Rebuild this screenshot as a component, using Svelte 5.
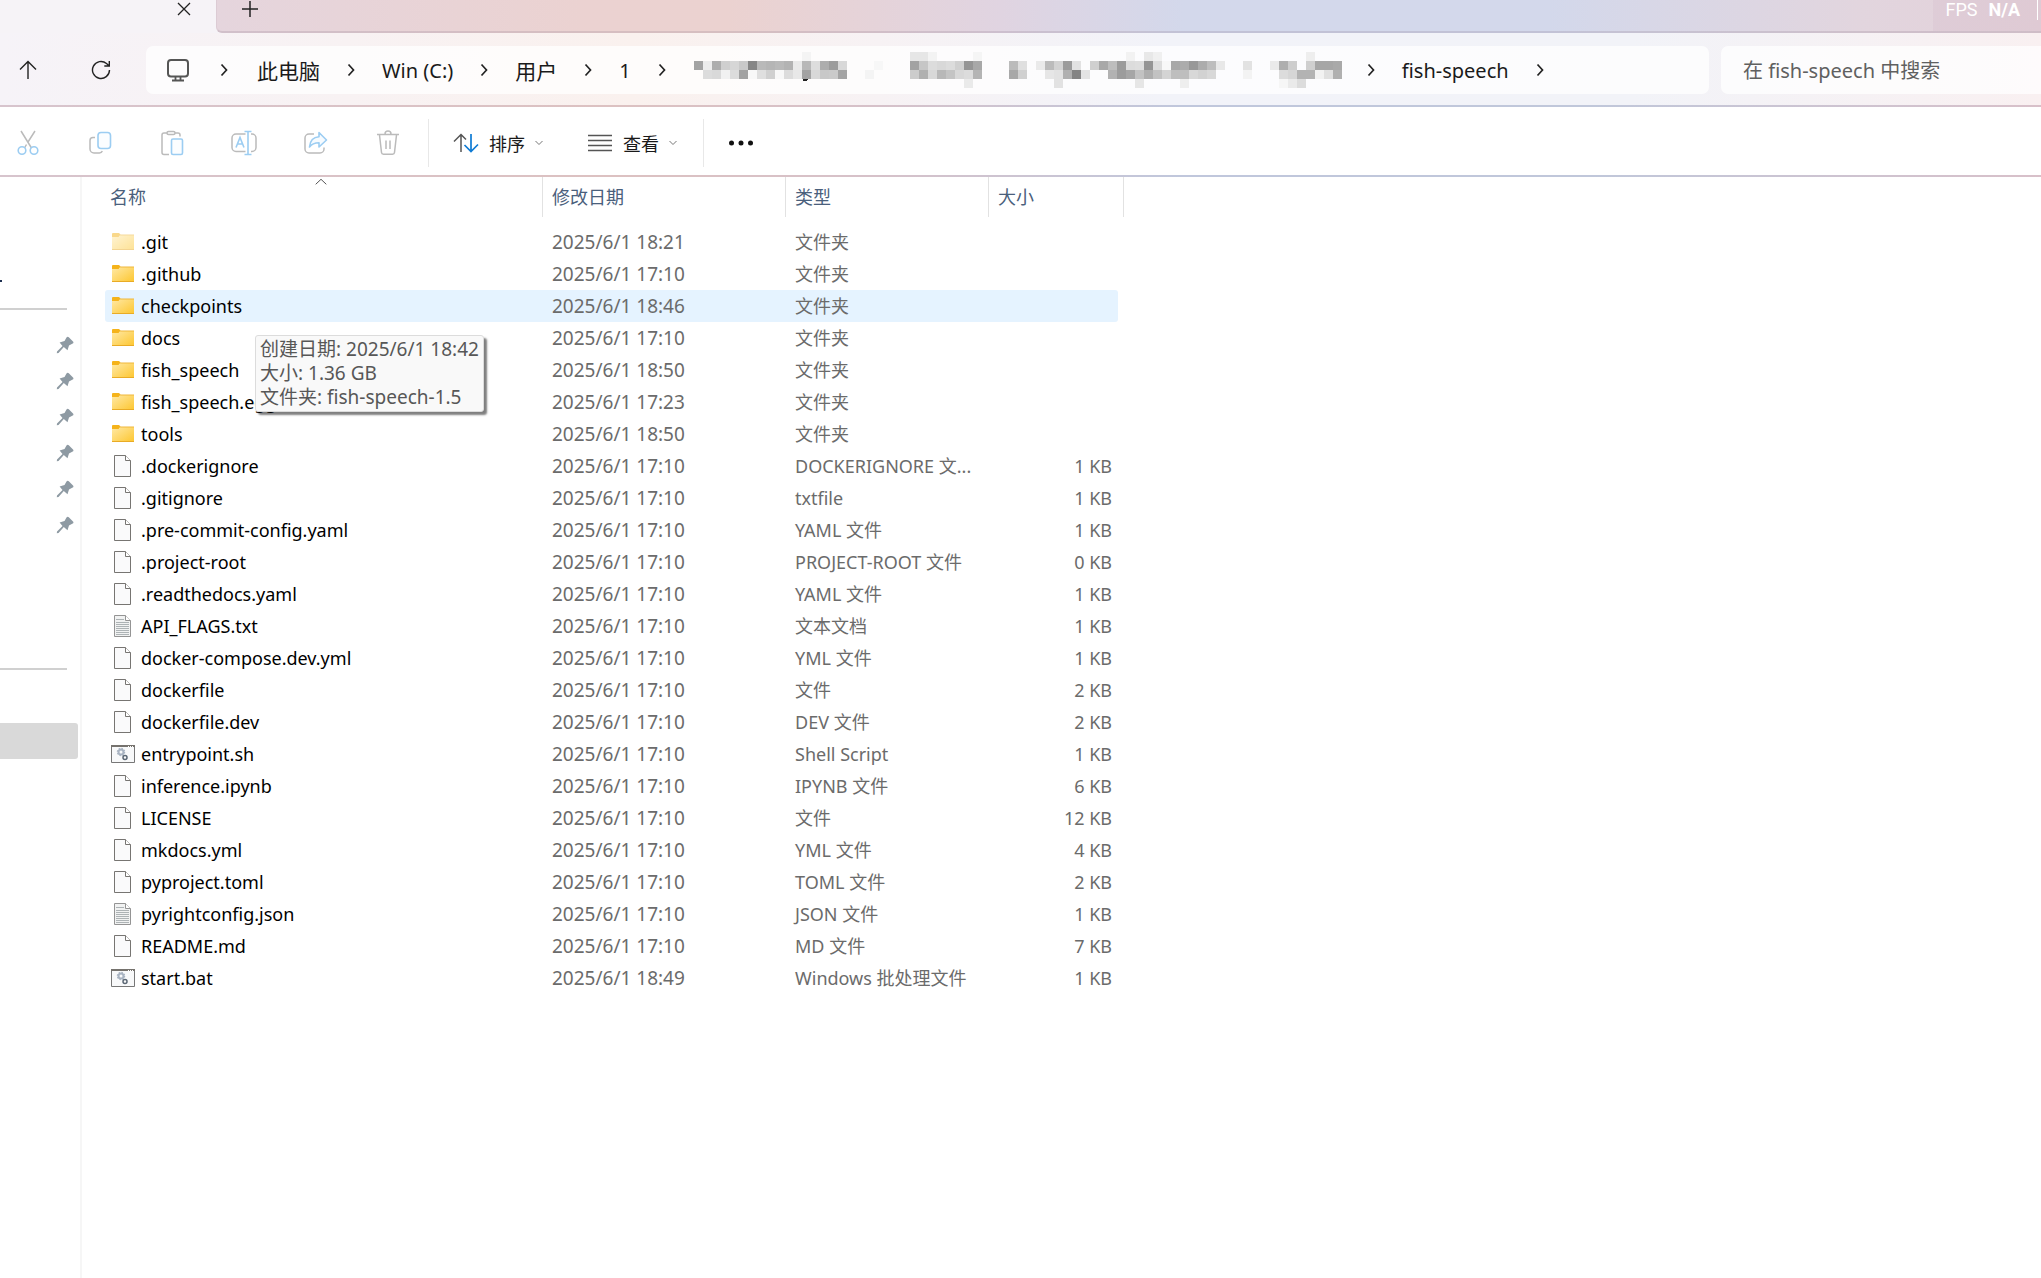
<script>
  const files = [
    ['.git', '18:21', '文件夹', '', 'hidden'],
    ['.github', '17:10', '文件夹', '', 'folder'],
    ['checkpoints', '18:46', '文件夹', '', 'folder'],
    ['docs', '17:10', '文件夹', '', 'folder'],
    ['fish_speech', '18:50', '文件夹', '', 'folder'],
    ['fish_speech.egg-info', '17:23', '文件夹', '', 'folder'],
    ['tools', '18:50', '文件夹', '', 'folder'],
    ['.dockerignore', '17:10', 'DOCKERIGNORE 文...', '1 KB', 'file'],
    ['.gitignore', '17:10', 'txtfile', '1 KB', 'file'],
    ['.pre-commit-config.yaml', '17:10', 'YAML 文件', '1 KB', 'file'],
    ['.project-root', '17:10', 'PROJECT-ROOT 文件', '0 KB', 'file'],
    ['.readthedocs.yaml', '17:10', 'YAML 文件', '1 KB', 'file'],
    ['API_FLAGS.txt', '17:10', '文本文档', '1 KB', 'text'],
    ['docker-compose.dev.yml', '17:10', 'YML 文件', '1 KB', 'file'],
    ['dockerfile', '17:10', '文件', '2 KB', 'file'],
    ['dockerfile.dev', '17:10', 'DEV 文件', '2 KB', 'file'],
    ['entrypoint.sh', '17:10', 'Shell Script', '1 KB', 'script'],
    ['inference.ipynb', '17:10', 'IPYNB 文件', '6 KB', 'file'],
    ['LICENSE', '17:10', '文件', '12 KB', 'file'],
    ['mkdocs.yml', '17:10', 'YML 文件', '4 KB', 'file'],
    ['pyproject.toml', '17:10', 'TOML 文件', '2 KB', 'file'],
    ['pyrightconfig.json', '17:10', 'JSON 文件', '1 KB', 'text'],
    ['README.md', '17:10', 'MD 文件', '7 KB', 'file'],
    ['start.bat', '18:49', 'Windows 批处理文件', '1 KB', 'script'],
  ].map(([name, time, type, size, icon]) => ({ name, date: `2025/6/1 ${time}`, type, size, icon }));

  // Grey levels of the censored path, one [row, first column, levels] run each.
  const runs = [
    [0, 12, 'f4'], [0, 24, 'e6 e6 f3'], [0, 31, 'f5'], [0, 48, 'f2'], [0, 50, 'e8 f0'], [0, 68, 'ee'],
    [1, 0, 'a3 ec ad cf d6 c9 86 b9 b5 b9 b3 ea b8 dd ad 9c d8'], [1, 20, 'f7'],
    [1, 24, 'a2 c6 dc d8 dc d0 95 a8'], [1, 35, 'bb df'], [1, 38, 'ea bb d2 9b e2'],
    [1, 44, 'cf a8 bd 9b dc de 95 dd f8 a8 ac 98 ac bd e8'], [1, 61, 'e2'], [1, 64, 'ea ae cd'], [1, 68, 'cf a6 a6 a9'],
    [2, 1, 'dc d9 f1 dc a2 f8 df d0 f8 dc e8 a3 d8 c8 ca a4'], [2, 19, 'f4'],
    [2, 24, 'cc b0 d8 b8 c4 d8 dc b4'], [2, 35, 'a8 d0'], [2, 39, 'e6 e2 b0 84 e4'],
    [2, 46, 'b2 9c a6 c2 ae c2 d4 be be d8 d2 d8'], [2, 61, 'f3'], [2, 65, 'dc d6 b3 b3 f2 e0 b0'],
    [3, 30, 'ea'], [3, 40, 'e2'], [3, 49, 'e6'], [3, 54, 'ee'], [3, 65, 'f6 ea dc'],
  ];
  const blocks = runs.flatMap(([row, col, levels]) =>
    levels.split(' ').map((g, i) => ({ x: (col + i) * 9, y: row * 9, fill: `#${g}${g}${g}` }))
  );
  const pins = [1, 2, 3, 4, 5, 6];
</script>

{#snippet chevron()}
  <svg class="chev" width="8" height="14" viewBox="0 0 8 14"><path d="M1.5 1.5 6.5 7l-5 5.5" fill="none" stroke="#222" stroke-width="1.7" /></svg>
{/snippet}

{#snippet down()}
  <svg width="8" height="6" viewBox="0 0 8 6"><path d="M.5 1 4 4.5 7.5 1" fill="none" stroke="#777" /></svg>
{/snippet}

{#snippet fileIcon(kind)}
  <svg class="icon" class:faded={kind === 'hidden'} width="24" height="24" viewBox="0 0 24 24">
    {#if kind === 'folder' || kind === 'hidden'}
      <path d="M1 4q0-1 1-1h6l1.500 1.500L8 7H1z" fill="#f5b31a" />
      <path d="M1 7h6.500l2-2H23v15H1z" fill="url(#folderFill)" />
      <path d="M9 5h14" stroke="#efb73b" />
      <path d="M1 19.500h22" stroke="#e9ab25" />
    {:else if kind === 'script'}
      <path d="M.5 3.500h23v17H.5z" fill="#f8f9fa" stroke="#777" />
      <path d="M0 4h24" stroke="#75726d" stroke-width="2" />
      <path d="M17 4.500h1m1 0h1m1 0h1" stroke="#fff" />
      <circle cx="10" cy="10" r="2.500" fill="none" stroke="#a9b4c2" stroke-width="2" />
      <circle cx="10" cy="10" r="3.500" fill="none" stroke="#a9b4c2" stroke-width="1.500" stroke-dasharray="1.400 1.350" />
      <circle cx="14" cy="15.500" r="2" fill="none" stroke="#5c6875" stroke-width="1.500" />
    {:else}
      <path d="M3.500 1.500h11l5 5v16h-16z" fill={kind === 'text' ? '#f1f2f2' : '#fafafb'} stroke={kind === 'text' ? '#949494' : '#777572'} />
      <path d="M14.500 1.500v5h5" fill="#fff" stroke={kind === 'text' ? '#949494' : '#777572'} />
      {#if kind === 'text'}
        <path d="M5 5.500h8M5 8.500h13M5 10.500h13M5 12.500h13M5 14.500h13M5 16.500h13M5 18.500h13M5 20.500h13" stroke="#adb3b5" />
      {/if}
    {/if}
  </svg>
{/snippet}

<svg class="defs" width="0" height="0" aria-hidden="true">
  <linearGradient id="folderFill" x1="0" y1="0" x2="1" y2="1"><stop offset="0" stop-color="#ffe9a6" /><stop offset="1" stop-color="#fdc62f" /></linearGradient>
</svg>

<div class="window">
  <header class="tabs">
    <div class="tab">
      <span class="tabname">fish-speech</span>
      <button aria-label="关闭标签页"><svg width="14" height="14" viewBox="0 0 14 14"><path d="m1 1 12 12M13 1 1 13" stroke="#222" stroke-width="1.300" /></svg></button>
    </div>
    <div class="strip">
      <button aria-label="新建标签页"><svg width="16" height="16" viewBox="0 0 16 16"><path d="M8 0v16M0 8h16" stroke="#222" stroke-width="1.500" /></svg></button>
      <div class="fps"><span>FPS</span><b>N/A</b><i></i></div>
    </div>
  </header>

  <nav class="nav">
    <button aria-label="向上"><svg width="20" height="20" viewBox="0 0 20 20"><path d="M10 19V1.500M2 9.500l8-8 8 8" fill="none" stroke="#222" stroke-width="1.400" /></svg></button>
    <button aria-label="刷新"><svg width="20" height="20" viewBox="0 0 20 20"><path d="M18.500 10a8.500 8.500 0 1 1-3-6.500l2.500 2.200M18.300 1v5h-5" fill="none" stroke="#222" stroke-width="1.400" /></svg></button>
    <div class="address">
      <svg class="pc" width="24" height="24" viewBox="0 0 24 24"><rect x="2" y="2" width="20" height="16.500" rx="3" fill="none" stroke="#555" stroke-width="2" /><path d="M9.500 19v3M14.500 19v3M6 22.500h12" stroke="#555" stroke-width="1.800" /></svg>
      {@render chevron()}
      <a class="cjk" href="#pc">此电脑</a>
      {@render chevron()}
      <a href="#c">Win (C:)</a>
      {@render chevron()}
      <a class="cjk" href="#users">用户</a>
      {@render chevron()}
      <a href="#user">1</a>
      {@render chevron()}
      <svg class="mosaic" width="648" height="36" viewBox="0 0 648 36" shape-rendering="crispEdges">
        {#each blocks as b}<rect x={b.x} y={b.y} width="9" height="9" fill={b.fill} />{/each}
        <path d="M109 27h5l-1 2h-4z" fill="#222" />
      </svg>
      {@render chevron()}
      <a href="#fish">fish-speech</a>
      {@render chevron()}
    </div>
    <input class="search" type="text" aria-label="搜索" placeholder="在 fish-speech 中搜索" />
  </nav>

  <div class="toolbar">
    <div class="actions">
      <button aria-label="剪切"><svg viewBox="0 0 24 26"><path d="m5 1 10.500 17M19 1l-7 11M10.500 14.500 8.500 18" stroke="#bbb" stroke-width="1.500" fill="none" /><g fill="none" stroke="#9ccdf2" stroke-width="1.600"><circle cx="6" cy="20.500" r="3.800" /><circle cx="18" cy="20.500" r="3.800" /></g></svg></button>
      <button aria-label="复制"><svg viewBox="0 0 24 26"><path d="M7 7.500H5a3 3 0 0 0-3 3V19a4 4 0 0 0 4 4h5.500a3 3 0 0 0 2.800-2" fill="none" stroke="#bbb" stroke-width="1.500" /><rect x="10" y="2.500" width="12.500" height="16" rx="3" fill="#fbfdff" stroke="#9ccdf2" stroke-width="1.600" /></svg></button>
      <button aria-label="粘贴"><svg viewBox="0 0 24 26"><path d="M9 24.500H4a2 2 0 0 1-2-2V5a2 2 0 0 1 2-2h3m8 0h3a2 2 0 0 1 2 2v1.500" fill="none" stroke="#bbb" stroke-width="1.500" /><rect x="7" y="1.500" width="8" height="3" rx="1.500" fill="none" stroke="#bbb" stroke-width="1.500" /><rect x="11.500" y="9" width="11" height="15.500" rx="1.500" fill="#fbfdff" stroke="#9ccdf2" stroke-width="1.600" /></svg></button>
      <button aria-label="重命名"><svg viewBox="0 0 24 26"><path d="M13.500 4H4a4 4 0 0 0-4 4v9.500a4 4 0 0 0 4 4h9.500M19 4h1a4 4 0 0 1 4 4v9.500a4 4 0 0 1-4 4h-1" fill="none" stroke="#bbb" stroke-width="1.500" /><path d="M4 17.500 8 7.500l4 10M5.500 14h5M16 1.500v23M12.500 1.500h7M12.500 24.500h7" fill="none" stroke="#9ccdf2" stroke-width="1.600" /></svg></button>
      <button aria-label="共享"><svg viewBox="0 0 24 26"><path d="M10 4H5a4 4 0 0 0-4 4v11a4 4 0 0 0 4 4h11a4 4 0 0 0 4-4v-1.500" fill="none" stroke="#bbb" stroke-width="1.500" /><path d="M15 2.500 22.500 10 15 17v-4.200c-4 0-7 .8-9.500 4.200C6 11 9.500 7 15 6.700z" fill="#f6fbff" stroke="#9ccdf2" stroke-width="1.600" stroke-linejoin="round" /></svg></button>
      <button aria-label="删除"><svg viewBox="0 0 24 26"><path d="M1 4.500h22M9 4a3 3 0 0 1 6 0M3.500 5l2 17.500a2 2 0 0 0 2 1.800h9a2 2 0 0 0 2-1.800L20.500 5M10 10.500v8.500M14 10.500v8.500" fill="none" stroke="#bbb" stroke-width="1.500" /></svg></button>
    </div>
    <button class="menu"><svg width="26" height="20" viewBox="0 0 26 20"><path d="M8 19V1.500M1 8.500l7-7 5 5" fill="none" stroke="#555" stroke-width="1.500" /><path d="M18 1v17.500M11.500 12l6.500 6.500 7-7" fill="none" stroke="#0f7bd4" stroke-width="1.700" /></svg><span>排序</span>{@render down()}</button>
    <button class="menu"><svg width="26" height="20" viewBox="0 0 26 20"><path d="M1 2.500h24M1 7.500h24M1 12.500h24M1 17.500h24" stroke="#555" stroke-width="1.500" /></svg><span>查看</span>{@render down()}</button>
    <button class="more" aria-label="查看更多"><svg width="26" height="6" viewBox="0 0 26 6"><g fill="#111"><circle cx="3.500" cy="3" r="2.500" /><circle cx="13" cy="3" r="2.500" /><circle cx="22.500" cy="3" r="2.500" /></g></svg></button>
  </div>

  <div class="body">
    <aside>
      <div class="account"><i></i></div>
      <hr />
      <ul>
        {#each pins as p (p)}
          <li><svg width="18" height="18" viewBox="0 0 18 18"><path d="M10.500 1.500c.6-1 1.600-1 2.300-.3l4.200 4.200c.7.700.6 1.700-.3 2.200L13 9.500l-1.500 4.800L7.800 11 2.500 17l-1.700.3.200-1.800L6.500 10 3.600 6.600 8.500 5z" fill="#8e9aa3" /></svg></li>
        {/each}
      </ul>
      <hr />
      <div class="current"></div>
    </aside>

    <main>
      <table>
        <colgroup><col class="c-name" /><col class="c-date" /><col class="c-type" /><col class="c-size" /><col class="c-end" /></colgroup>
        <thead>
          <tr>
            <th class="name"><div>名称</div><svg class="sort" width="12" height="7" viewBox="0 0 12 7"><path d="m.7 6.300 5.300-5 5.300 5" fill="none" stroke="#555" /></svg></th>
            <th><div>修改日期</div></th>
            <th><div>类型</div></th>
            <th><div class="open">大小</div></th>
            <th aria-hidden="true"><div></div></th>
          </tr>
        </thead>
        <tbody>
          {#each files as f (f.name)}
            <tr class:hover={f.name === 'checkpoints'}>
              <td class="name"><div>{@render fileIcon(f.icon)}<span>{f.name}</span></div></td>
              <td class="date">{f.date}</td>
              <td>{f.type}</td>
              <td class="size">{f.size}</td>
            </tr>
          {/each}
        </tbody>
      </table>
      <div class="tip" role="tooltip">
        <div>创建日期: 2025/6/1 18:42</div>
        <div>大小: 1.36 GB</div>
        <div>文件夹: fish-speech-1.5</div>
      </div>
    </main>
  </div>
</div>

<style>
  :global(body) { background: #fff; overflow: hidden; }
  .defs { position: absolute; }
  .window { min-height: 100vh; display: flex; flex-direction: column; font-family: "Noto Sans", "Noto Sans CJK SC", sans-serif; font-size: 18px; color: #1a1a1a; overflow: hidden; }
  button { font: inherit; color: inherit; background: none; border: 0; padding: 0; display: flex; align-items: center; justify-content: center; }
  svg { display: block; flex: none; }

  .tabs { display: flex; height: 33px; background: #f6f3f7; }
  .tab { flex: 0 0 216px; display: flex; justify-content: space-between; align-items: flex-start; box-sizing: border-box; padding-right: 25px; }
  .tabname { width: 1px; height: 20px; line-height: 16px; overflow: hidden; display: flex; justify-content: flex-end; }
  .tab button { height: 17px; }
  .strip { flex: 1; display: flex; justify-content: space-between; align-items: flex-start; padding-left: 25px; border-radius: 0 0 0 6px; border-bottom: 2px solid rgba(130, 110, 130, .2); border-left: 1px solid #dccbd4; background: linear-gradient(90deg, #e5d5dd, #ebd2d1 20%, #ebd2d0 28%, #e0d4e1 43%, #d3d8eb 53%, #d3d8eb 73%, #e2d5de 90%, #e3d1d9); }
  .strip button { height: 18px; }
  .fps { display: flex; gap: 11px; height: 31px; line-height: 20px; padding: 0 3px 0 13px; background: rgba(200, 160, 180, .12); color: #fff; font-family: Roboto, sans-serif; font-size: 18px; }
  .fps b { margin-right: 6px; }
  .fps i { width: 1px; height: 20px; background: #fff; }

  .nav { display: flex; align-items: center; height: 70px; padding: 2px 0 0 18px; background: linear-gradient(90deg, #f6f3f8, #f8f2f3 17%, #faf1ee 31%, #f7f2f4 43%, #f2f3f9 57%, #f2f3f8 80%, #f9f0f1); }
  .nav > button { width: 20px; margin-right: 53px; }
  .nav > button + button { margin-right: 35px; }
  .address { flex: 1; display: flex; align-items: center; gap: 27px; height: 48px; box-sizing: border-box; padding-left: 20px; border-radius: 7px; background: rgba(255, 255, 255, .75); font-size: 20px; white-space: nowrap; }
  .pc { margin-right: 3px; }
  .pc + .chev { margin-right: 2px; }
  .mosaic { margin: 0 -2px 0 1px; }
  .address a { color: inherit; text-decoration: none; }
  .address .cjk { font-size: 21px; }
  .search { flex: 0 0 320px; width: 0; margin-left: 12px; height: 48px; box-sizing: border-box; padding: 0 22px; border: 0; border-radius: 7px 0 0 7px; background: rgba(255, 255, 255, .75); font: inherit; font-size: 20px; }
  .search::placeholder { color: #606060; opacity: 1; }

  .toolbar { display: flex; align-items: center; height: 64px; padding: 6px 8px 2px; background: linear-gradient(#fff, #fff) 0 2px / 100% calc(100% - 4px) no-repeat, linear-gradient(90deg, #d7c4cd, #dcc1c1 30%, #d6c1c9 43%, #c0c7dc 58%, #c0c7da 78%, #d8c0c9); }
  .actions { display: flex; gap: 32px; padding-right: 20px; height: 48px; border-right: 1px solid #e8e8e8; }
  .actions button { width: 40px; }
  .actions svg { width: 24px; height: 26px; overflow: visible; }
  .menu { gap: 10px; margin-left: 24px; }
  .menu + .menu { margin-left: 44px; }
  .more { margin-left: 26px; padding-left: 24px; height: 48px; border-left: 1px solid #e8e8e8; }

  .body { flex: 1; display: flex; }
  aside { flex: 0 0 80px; border-right: 2px solid #f6f6f6; }
  .account { height: 131px; display: flex; }
  .account i { width: 2px; height: 2px; margin-top: 103px; background: #1d2f50; }
  hr { width: 67px; height: 2px; margin: 0; border: 0; background: #d0d0d0; }
  ul { list-style: none; margin: 0; padding: 17px 0 125px; }
  li { height: 36px; display: flex; align-items: center; justify-content: flex-end; padding-right: 6px; }
  .current { width: 78px; height: 36px; margin-top: 53px; border-radius: 0 3px 3px 0; background: #d9d9d9; }

  main { flex: 1; position: relative; padding-left: 23px; }
  table { table-layout: fixed; width: 1019px; border-collapse: separate; border-spacing: 0; color: #6b6b6b; line-height: 32px; }
  .c-name { width: 438px; } .c-date { width: 243px; } .c-type { width: 203px; } .c-size { width: 129px; } .c-end { width: 6px; }
  th { position: relative; height: 49px; padding: 0; vertical-align: top; text-align: left; font-weight: 400; color: #4a607c; }
  th > div { height: 40px; line-height: 40px; box-sizing: border-box; padding-left: 9px; border-right: 1px solid #e2e2e2; }
  th:last-child > div { padding: 0; }
  th.name > div { padding-left: 5px; }
  th > .open { border: 0; }
  .sort { position: absolute; top: 1px; left: 210px; }
  td { height: 32px; padding: 0 0 0 9px; white-space: nowrap; }
  td.name { padding-left: 6px; color: #000; }
  td.name div { display: flex; align-items: center; gap: 6px; }
  .faded { opacity: .5; }
  td.date { font-size: 19px; }
  td.size { text-align: right; padding-right: 6px; }
  .hover td { background: #e5f3ff; }
  .hover td:first-child { border-radius: 3px 0 0 3px; }
  .hover td:last-child { border-radius: 0 3px 3px 0; }

  .tip { position: absolute; left: 173px; top: 158px; padding: 1px 4px 2px; border: 1px solid #dcdcdc; border-radius: 3px; background: #f9f9f9; box-shadow: 3px 3px 2px rgba(0, 0, 0, .5); color: #575757; font-size: 19px; line-height: 24px; white-space: nowrap; }
</style>
